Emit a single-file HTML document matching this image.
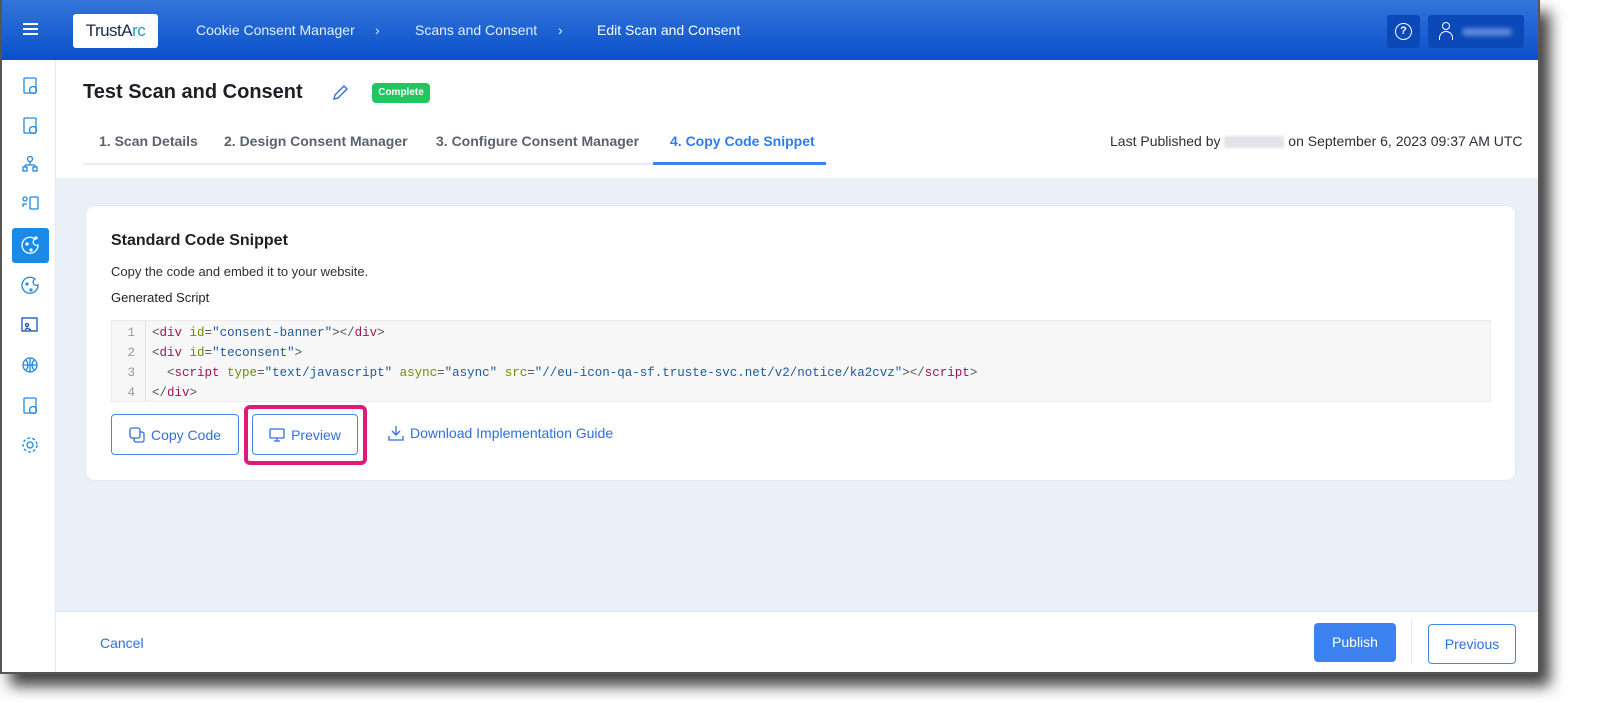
<!DOCTYPE html>
<html><head><meta charset="utf-8"><style>
*{box-sizing:border-box;margin:0;padding:0}
body{width:1600px;height:716px;background:#fff;font-family:"Liberation Sans",sans-serif;position:relative;overflow:hidden}
.win{position:absolute;left:0;top:0;width:1540px;height:674px;border:2px solid #555;border-top:none;box-shadow:10px 12px 14px rgba(0,0,0,.75);background:#fff;overflow:hidden}
.hdr{position:absolute;left:0;top:0;right:0;height:60px;background:linear-gradient(#3375d8,#0a50cc)}
.side{position:absolute;left:0;top:60px;width:54px;bottom:0;background:#fff;border-right:1px solid #e3e8f0}
.main{position:absolute;left:54px;top:60px;right:0;bottom:0}
.ico{position:absolute;left:18px;width:20px;height:20px}
.bc{position:absolute;top:22px;color:#e6eeff;font-size:14px}
.tab{position:absolute;top:73px;font-size:14px;font-weight:bold;color:#5a6170}
.code{position:absolute;left:25px;top:114px;width:1380px;height:82px;background:#f7f7f7;border:1px solid #ececec;font-family:"Liberation Mono",monospace;font-size:12.5px}
.ln{position:absolute;left:0;top:0;width:34px;height:100%;border-right:1px solid #e0e0e0;color:#999;text-align:right;padding-right:10px;line-height:20px;padding-top:2px}
.cl{position:absolute;left:40px;top:2px;line-height:20px;white-space:pre;color:#555}
.t{color:#a0155a}.a{color:#6b8e00}.s{color:#1d5a9c}
.btn{position:absolute;top:208px;height:41px;border:1px solid #4a86e8;border-radius:4px;color:#2f6fe0;font-size:14px;display:flex;align-items:center;justify-content:center;gap:6px}
</style></head><body>
<div class="win">
<div class="hdr">
 <div style="position:absolute;left:21px;top:23px;width:15px;height:2px;background:#fff;box-shadow:0 5px 0 #fff,0 10px 0 #fff"></div>
 <div style="position:absolute;left:71px;top:14px;width:85px;height:34px;background:#fff;border-radius:3px;font-size:17px;color:#1b2a4a;line-height:34px;text-align:center;letter-spacing:-.5px">TrustA<span style="color:#18a0c8">rc</span></div>
 <div class="bc" style="left:194px">Cookie Consent Manager</div>
 <div class="bc" style="left:373px">&#8250;</div>
 <div class="bc" style="left:413px">Scans and Consent</div>
 <div class="bc" style="left:556px">&#8250;</div>
 <div class="bc" style="left:595px;color:#fff">Edit Scan and Consent</div>
 <div style="position:absolute;left:1385px;top:15px;width:33px;height:33px;background:#0c49b8;border-radius:3px"><div style="margin:8px;width:17px;height:17px;border:1.6px solid #fff;border-radius:50%;color:#fff;font-size:11px;font-weight:bold;text-align:center;line-height:14px">?</div></div>
 <div style="position:absolute;left:1426px;top:15px;width:96px;height:33px;background:#0c49b8;border-radius:3px">
  <div style="position:absolute;left:14px;top:7px;width:8px;height:8px;border:1.6px solid #fff;border-radius:50%"></div>
  <div style="position:absolute;left:11px;top:16px;width:14px;height:9px;border:1.6px solid #fff;border-bottom:none;border-radius:7px 7px 0 0"></div>
  <div style="position:absolute;left:34px;top:13px;width:50px;height:8px;background:#5a86d8;border-radius:4px;filter:blur(2px)"></div>
 </div>
</div>
<div class="side">
 <svg width="54" height="420" viewBox="0 0 54 420" fill="none" stroke="#1e88e5" stroke-width="1.3">
  <rect x="10" y="168" width="37" height="35" rx="3" fill="#1a8ae8" stroke="none"/>
  <g><rect x="22" y="18" width="12" height="15" rx="1"/><circle cx="31" cy="30" r="3.5"/></g>
  <g><rect x="22" y="58" width="12" height="15" rx="1"/><circle cx="31" cy="70" r="3.5"/></g>
  <g><circle cx="28" cy="99" r="2.5"/><path d="M28 101v4M23 105h10M23 105v2M33 105v2"/><rect x="21" y="107" width="4" height="4"/><rect x="31" y="107" width="4" height="4"/></g>
  <g><circle cx="23" cy="139" r="2"/><path d="M21 147v-3h4"/><rect x="28" y="137" width="8" height="12" rx="1"/></g>
  <g stroke="#fff"><path d="M33 179a8 8 0 1 0 3 6a3 3 0 0 1-3-6z"/><circle cx="25" cy="184" r="1"/><circle cx="29" cy="190" r="1"/><circle cx="34" cy="178" r="1"/></g>
  <g><path d="M33 219a8 8 0 1 0 3 6a3 3 0 0 1-3-6z"/><circle cx="25" cy="224" r="1"/><circle cx="29" cy="230" r="1"/></g>
  <g stroke="#1a4fb8"><rect x="20" y="258" width="15" height="13"/><circle cx="25" cy="265" r="1.5"/><path d="M23 270l2-2 4 2"/></g>
  <g><circle cx="28" cy="305" r="7"/><path d="M28 298v14M21 305h14M24 300q4 5 0 10M32 300q-4 5 0 10"/></g>
  <g><rect x="22" y="338" width="12" height="15" rx="1"/><circle cx="31" cy="350" r="3.5"/></g>
  <g><circle cx="28" cy="385" r="3"/><circle cx="28" cy="385" r="7" stroke-dasharray="3 2"/></g>
 </svg>
</div>
<div class="main">
 <div style="position:absolute;left:0;top:0;right:0;height:118px;background:#fff">
  <div style="position:absolute;left:27px;top:21px;font-size:20px;font-weight:bold;color:#1c1f26">Test Scan and Consent</div>
  <svg style="position:absolute;left:275px;top:24px" width="18" height="18" viewBox="0 0 18 18" fill="none" stroke="#2f6fe0" stroke-width="1.4"><path d="M3 15l1-4 9-9 3 3-9 9z"/></svg>
  <div style="position:absolute;left:316px;top:23px;width:58px;height:20px;background:#22c55e;border-radius:4px;color:#fff;font-size:10px;font-weight:bold;text-align:center;line-height:20px">Complete</div>
  <div class="tab" style="left:43px">1. Scan Details</div>
  <div class="tab" style="left:168px">2. Design Consent Manager</div>
  <div class="tab" style="left:380px">3. Configure Consent Manager</div>
  <div class="tab" style="left:614px;color:#2f7bf0">4. Copy Code Snippet</div>
  <div style="position:absolute;left:27px;top:103px;width:743px;height:2px;background:#e8edf4"></div>
  <div style="position:absolute;left:597px;top:102px;width:173px;height:3px;background:#3a82f0"></div>
  <div style="position:absolute;left:1054px;top:73px;font-size:14px;color:#2b2f38">Last Published by <span style="display:inline-block;width:60px;height:12px;background:#e2e4e8;vertical-align:middle;filter:blur(1px)"></span> on September 6, 2023 09:37 AM UTC</div>
 </div>
 <div style="position:absolute;left:0;top:118px;right:0;height:434px;background:#eaf0f8;border-bottom:1px solid #dde4ee">
  <div style="position:absolute;left:29px;top:27px;width:1431px;height:276px;background:#fff;border-radius:10px;border:1px solid #e4e9f0">
   <div style="position:absolute;left:25px;top:26px;font-size:16px;font-weight:bold;color:#1c1f26">Standard Code Snippet</div>
   <div style="position:absolute;left:25px;top:58px;font-size:13px;color:#2b2f38">Copy the code and embed it to your website.</div>
   <div style="position:absolute;left:25px;top:84px;font-size:13px;color:#1c1f26">Generated Script</div>
   <div class="code"><div class="ln">1<br>2<br>3<br>4</div><div class="cl">&lt;<span class="t">div</span> <span class="a">id</span>=<span class="s">"consent-banner"</span>&gt;&lt;/<span class="t">div</span>&gt;
&lt;<span class="t">div</span> <span class="a">id</span>=<span class="s">"teconsent"</span>&gt;
  &lt;<span class="t">script</span> <span class="a">type</span>=<span class="s">"text/javascript"</span> <span class="a">async</span>=<span class="s">"async"</span> <span class="a">src</span>=<span class="s">"//eu-icon-qa-sf.truste-svc.net/v2/notice/ka2cvz"</span>&gt;&lt;/<span class="t">script</span>&gt;
&lt;/<span class="t">div</span>&gt;</div></div>
   <div class="btn" style="left:25px;width:128px"><svg width="16" height="16" viewBox="0 0 16 16" fill="none" stroke="#2f6fe0" stroke-width="1.3"><rect x="1" y="1" width="10" height="10" rx="2"/><path d="M5 11v2a2 2 0 0 0 2 2h6a2 2 0 0 0 2-2V7a2 2 0 0 0-2-2h-2"/></svg>Copy Code</div>
   <div style="position:absolute;left:158px;top:199px;width:123px;height:60px;border:4px solid #e0197a;border-radius:6px"></div>
   <div class="btn" style="left:166px;width:106px"><svg width="16" height="16" viewBox="0 0 16 16" fill="none" stroke="#2f6fe0" stroke-width="1.3"><rect x="1" y="2" width="14" height="9" rx="1"/><path d="M8 11v3M5 14h6"/></svg>Preview</div>
   <div style="position:absolute;left:302px;top:219px;font-size:14px;color:#2f6fe0;display:flex;gap:6px;align-items:center"><svg width="16" height="16" viewBox="0 0 16 16" fill="none" stroke="#2f6fe0" stroke-width="1.3"><path d="M8 1v9M4 6l4 4 4-4M1 11v4h14v-4"/></svg>Download Implementation Guide</div>
  </div>
 </div>
 <div style="position:absolute;left:44px;top:575px;font-size:14px;color:#2f6fe0">Cancel</div>
 <div style="position:absolute;left:1258px;top:563px;width:82px;height:39px;background:#3b82f0;border-radius:4px;color:#fff;font-size:14px;text-align:center;line-height:39px">Publish</div>
 <div style="position:absolute;left:1355px;top:559px;width:1px;height:45px;background:#e4e8ee"></div>
 <div style="position:absolute;left:1372px;top:564px;width:88px;height:40px;border:1px solid #4a86e8;border-radius:4px;color:#2f6fe0;font-size:14px;text-align:center;line-height:38px">Previous</div>
</div>
</div>
</body></html>
